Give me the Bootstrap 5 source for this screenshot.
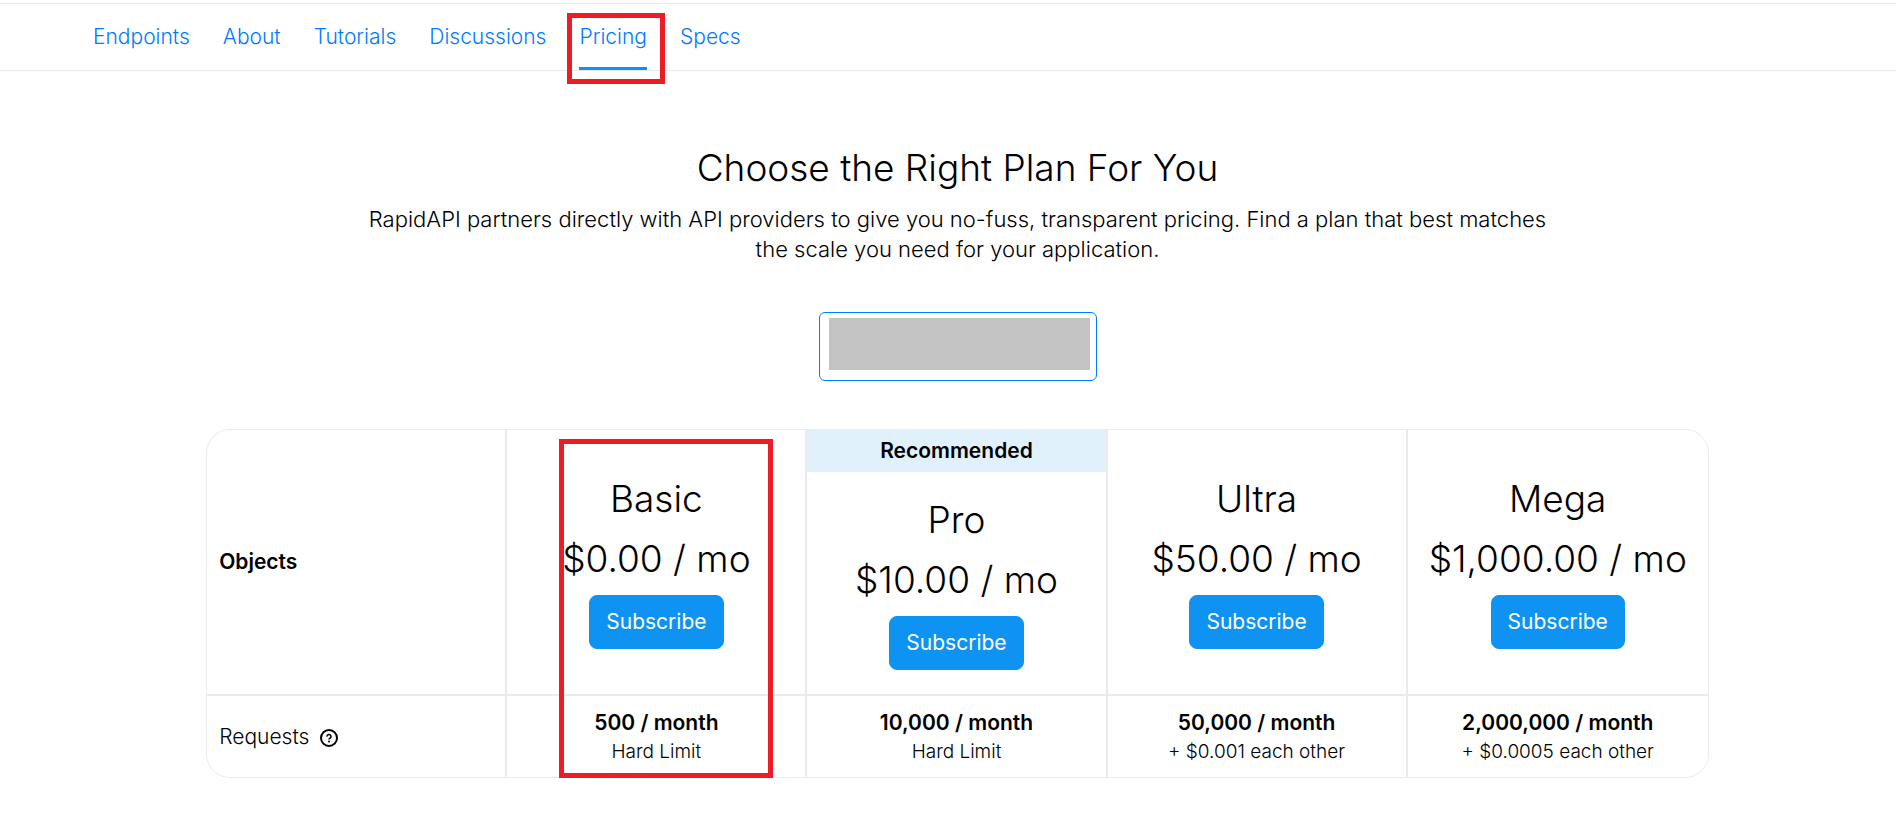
<!DOCTYPE html>
<html lang="en">
<head>
<meta charset="utf-8">
<meta name="viewport" content="width=device-width, initial-scale=1">
<title>Pricing</title>
<link href="https://cdn.jsdelivr.net/npm/bootstrap@5.3.0/dist/css/bootstrap.min.css" rel="stylesheet">
<style>
  body { font-family: Inter, "Liberation Sans", sans-serif; font-size: 21px; font-weight: 300; line-height: 30px; color: #000; background: #fff; }
  .api-tabs { margin-top: 3px; padding-left: 93px; gap: 33px; border-top: 1px solid #e8e8e8; border-bottom: 1px solid #e8e8e8; }
  .api-tabs .nav-link { padding: 18px 0 15px; color: #007bff; border-bottom: 3px solid transparent; }
  .api-tabs .nav-link.active { border-bottom-color: #0f93f3; }
  .highlight { position: absolute; border: 5px solid #ee1c25; pointer-events: none; }
  .highlight-tab { inset: 9px -18px -17px -12px; }
  .highlight-plan { top: 9px; bottom: -1px; left: calc(20% + 52px); width: 214px; }
  main { padding: 73px 0 48px 19px; }
  h1, .plan-title { font-size: 37px; font-weight: 300; line-height: 48px; margin: 0; }
  .intro { max-width: 1200px; margin-top: 12px; font-size: 22px; }
  .period-box { width: 278px; padding: 5px 6px 10px 9px; border: 1px solid #007bff; border-radius: 6px; margin-top: 48px; }
  .period-fill { height: 52px; background: #c3c3c3; }
  .plans { width: calc(80% + 1px); margin-top: 48px; border: 1px solid #ebebeb; border-radius: 24px; }
  .plans table { table-layout: fixed; border-collapse: separate; border-spacing: 0; }
  .plans th, .plans td { padding: 0; font-weight: 300; vertical-align: middle; border-right: 2px solid #ebebeb; text-align: center; }
  .plans tr > :last-child { border-right: 0; }
  .plans thead th { border-bottom: 2px solid #ebebeb; }
  .plans tr > :first-child { padding-left: 12px; text-align: left; }
  .plans .strong { font-weight: 600; }
  .ribbon { background: #e1f1fb; padding: 6px 0; }
  .plan { padding: 24px 0; gap: 12px; }
  .btn-plan { --bs-btn-color: #fff; --bs-btn-bg: #0f93f3; --bs-btn-border-color: #0f93f3; --bs-btn-hover-color: #fff; --bs-btn-hover-bg: #0b82d9; --bs-btn-hover-border-color: #0b82d9; font-size: 21px; font-weight: 400; line-height: 30px; padding: 11px 16px; border-radius: 8px; }
  .plans td.quota { padding: 12px 0 11px; }
  .row-label { gap: 10px; }
  .note { font-size: 19px; line-height: 28px; }
</style>
</head>
<body>
<nav class="nav api-tabs" aria-label="API sections">
  <a class="nav-link" href="#">Endpoints</a>
  <a class="nav-link" href="#">About</a>
  <a class="nav-link" href="#">Tutorials</a>
  <a class="nav-link" href="#">Discussions</a>
  <a class="nav-link active position-relative" href="#" aria-current="page">Pricing<span class="highlight highlight-tab"></span></a>
  <a class="nav-link" href="#">Specs</a>
</nav>
<main class="d-flex flex-column align-items-center">
  <h1 class="text-center">Choose the Right Plan For You</h1>
  <p class="intro text-center mb-0">RapidAPI partners directly with API providers to give you no-fuss, transparent pricing. Find a plan that best matches the scale you need for your application.</p>
  <div class="period-box"><div class="period-fill"></div></div>
  <div class="plans position-relative">
    <table class="w-100">
      <thead>
        <tr>
          <th scope="col"><span class="strong">Objects</span></th>
          <th scope="col"><div class="plan d-flex flex-column align-items-center"><h2 class="plan-title">Basic</h2><div class="plan-title">$0.00 / mo</div><button type="button" class="btn btn-plan">Subscribe</button></div></th>
          <th scope="col"><div class="ribbon strong">Recommended</div><div class="plan d-flex flex-column align-items-center"><h2 class="plan-title">Pro</h2><div class="plan-title">$10.00 / mo</div><button type="button" class="btn btn-plan">Subscribe</button></div></th>
          <th scope="col"><div class="plan d-flex flex-column align-items-center"><h2 class="plan-title">Ultra</h2><div class="plan-title">$50.00 / mo</div><button type="button" class="btn btn-plan">Subscribe</button></div></th>
          <th scope="col"><div class="plan d-flex flex-column align-items-center"><h2 class="plan-title">Mega</h2><div class="plan-title">$1,000.00 / mo</div><button type="button" class="btn btn-plan">Subscribe</button></div></th>
        </tr>
      </thead>
      <tbody>
        <tr>
          <th scope="row"><div class="row-label d-flex align-items-center">Requests
            <svg width="20" height="20" viewBox="0 0 20 20" fill="none" stroke="#000" stroke-width="2" aria-hidden="true"><circle cx="10" cy="11" r="8"/><path d="M8 9.6a2 2 0 1 1 3 1.6c-.7.4-1 .7-1 1.3" stroke-width="1.6"/><circle cx="10" cy="14.4" r="1" fill="#000" stroke="none"/></svg></div></th>
          <td class="quota"><div class="strong">500 / month</div><div class="note">Hard Limit</div></td>
          <td class="quota"><div class="strong">10,000 / month</div><div class="note">Hard Limit</div></td>
          <td class="quota"><div class="strong">50,000 / month</div><div class="note">+ $0.001 each other</div></td>
          <td class="quota"><div class="strong">2,000,000 / month</div><div class="note">+ $0.0005 each other</div></td>
        </tr>
      </tbody>
    </table>
    <span class="highlight highlight-plan"></span>
  </div>
</main>
<script src="https://cdn.jsdelivr.net/npm/bootstrap@5.3.0/dist/js/bootstrap.bundle.min.js"></script>
</body>
</html>
